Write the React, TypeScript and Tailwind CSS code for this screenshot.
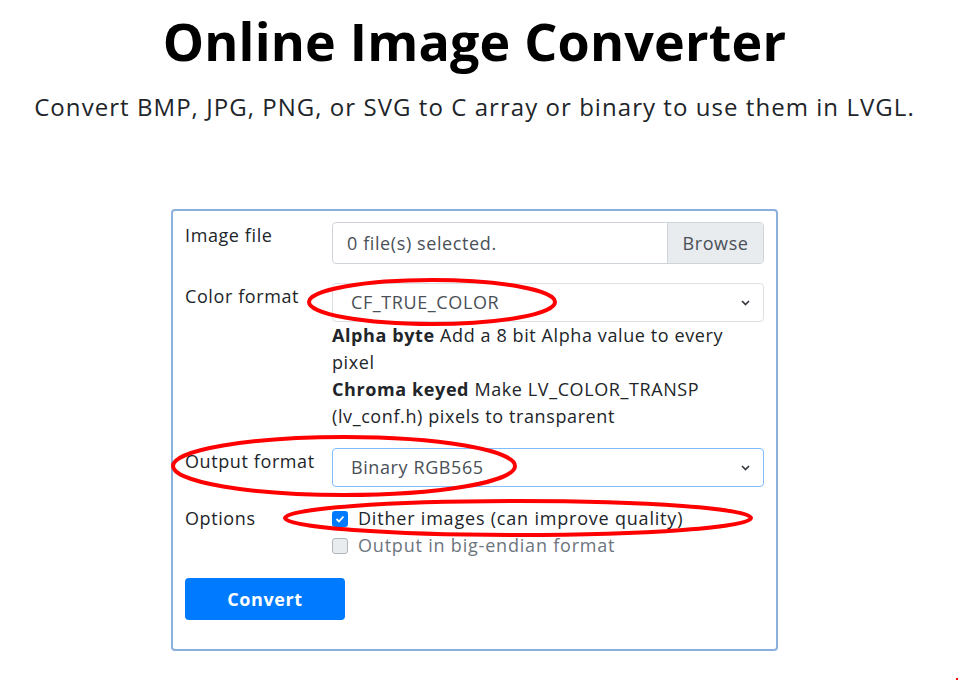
const font = { fontFamily: '"Open Sans", "Liberation Sans", sans-serif' };

const Label = ({ children }: { children: React.ReactNode }) => (
    <div className="w-[147px] shrink-0 text-[18px] tracking-[0.6px] text-[#212529]">{children}</div>
)

const Select = ({ value, focus }: { value: string; focus?: boolean }) => (
    <div className={`flex items-center justify-between h-[39px] pl-[18px] pr-[13px] rounded-[4px] border bg-white text-[18px] tracking-[0.6px] text-[#495057] ${focus ? "border-[#80bdff]" : "border-[#dde1e5]"}`}>
        <span>{value}</span>
        <svg width="9" height="6" viewBox="0 0 9 6"><path d="M1 1 L4.5 4.5 L8 1" fill="none" stroke="#343a40" strokeWidth="1.7" /></svg>
    </div>
)

export default function App() {
    return (
        <div className="relative w-[959px] h-[682px] bg-white overflow-hidden" style={font}>
            <div className="pr-[10px]">
                <h1 className="pt-[9px] text-center text-[52px] font-bold leading-[64px] text-black tracking-[0.2px]">Online Image Converter</h1>
                <p className="mt-[18px] text-center text-[24px] leading-[32px] text-[#212529] tracking-[1.05px]">Convert BMP, JPG, PNG, or SVG to C array or binary to use them in LVGL.</p>
            </div>

            <div className="ml-[171px] mt-[86px] w-[607px] h-[442px] border-2 border-[#8cb0de] rounded-[4px] px-[12px] pt-[11px] text-[18px] tracking-[0.6px]">
                {/* image file */}
                <div className="flex">
                    <Label>Image file</Label>
                    <div className="flex-1 flex h-[42px] rounded-[4px] border border-[#ced4da] overflow-hidden">
                        <div className="flex-1 flex items-center pl-[14px] text-[#495057]">0 file(s) selected.</div>
                        <div className="w-[96px] flex items-center justify-center bg-[#e9ecef] border-l border-[#ced4da] text-[#495057]">Browse</div>
                    </div>
                </div>

                {/* color format */}
                <div className="flex mt-[19px]">
                    <Label>Color format</Label>
                    <div className="flex-1">
                        <Select value="CF_TRUE_COLOR" />
                        <div className="leading-[27px] text-[#212529]">
                            <div><b>Alpha byte</b> Add a 8 bit Alpha value to every</div>
                            <div>pixel</div>
                            <div><b>Chroma keyed</b> Make LV_COLOR_TRANSP</div>
                            <div>(lv_conf.h) pixels to transparent</div>
                        </div>
                    </div>
                </div>

                {/* output format */}
                <div className="flex mt-[18px]">
                    <Label>Output format</Label>
                    <div className="flex-1">
                        <Select value="Binary RGB565" focus />
                    </div>
                </div>

                {/* options */}
                <div className="flex mt-[18px]">
                    <Label>Options</Label>
                    <div className="flex-1 leading-[27px] tracking-[0.8px]">
                        <div className="flex items-center">
                            <span className="w-[16px] h-[16px] rounded-[3px] bg-[#007bff] flex items-center justify-center">
                                <svg width="10" height="8" viewBox="0 0 10 8"><path d="M1.5 4 L4 6.5 L8.5 1.5" fill="none" stroke="white" strokeWidth="1.8" /></svg>
                            </span>
                            <span className="ml-[10px] text-[#212529]">Dither images (can improve quality)</span>
                        </div>
                        <div className="flex items-center">
                            <span className="w-[16px] h-[16px] rounded-[3px] bg-[#e9ecef] border border-[#adb5bd]" />
                            <span className="ml-[10px] text-[#6c757d]">Output in big-endian format</span>
                        </div>
                    </div>
                </div>

                <button className="mt-[19px] w-[160px] h-[42px] rounded-[4px] bg-[#007bff] text-white text-[18px] tracking-[0.6px] font-bold">Convert</button>
            </div>

            {/* annotation marks */}
            <svg className="absolute left-0 top-0 pointer-events-none" width="959" height="682">
                <ellipse cx="432" cy="302" rx="123" ry="22" fill="none" stroke="#f00" strokeWidth="4" />
                <ellipse cx="344" cy="466" rx="171" ry="29" fill="none" stroke="#f00" strokeWidth="4" />
                <ellipse cx="518" cy="518" rx="233" ry="17" fill="none" stroke="#f00" strokeWidth="4" />
                <rect x="956" y="678" width="2" height="2" fill="#f00" />
            </svg>
        </div>
    )
}
